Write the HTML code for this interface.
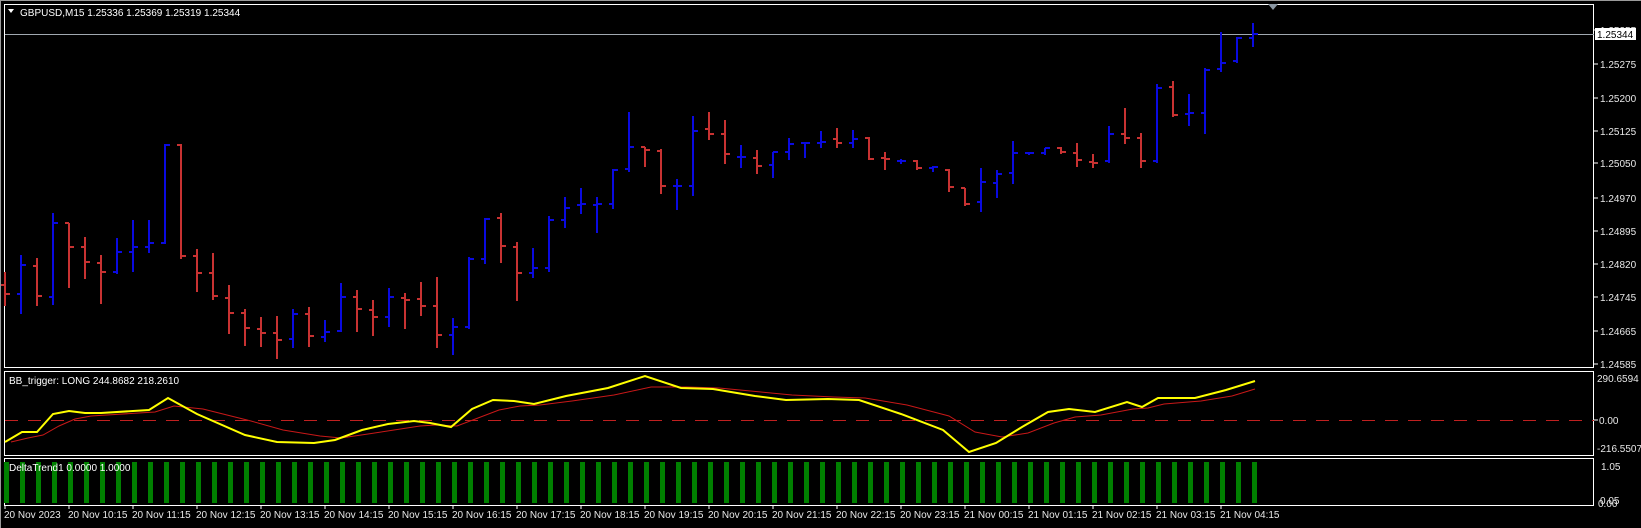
<!DOCTYPE html>
<html><head><meta charset="utf-8"><style>
html,body{margin:0;padding:0;background:#000;width:1641px;height:528px;overflow:hidden}
body{position:relative;font-family:"Liberation Sans",sans-serif;font-size:10px;color:#e8e8e8}
svg{position:absolute;left:0;top:0}
</style></head><body>
<svg id="s" width="1641" height="528" xmlns="http://www.w3.org/2000/svg" font-family="Liberation Sans, sans-serif" font-size="10"></svg>
<script>
var B=[[272,305,285,294],[255,313,294,265],[258,305,266,296],[213,304,297,223],[223,287,223,247],[237,278,247,262],[255,303,263,272],[238,273,272,252],[220,271,252,247],[220,252,247,243],[144,243,243,145],[144,258,145,256],[249,291,256,273],[253,299,273,296],[285,333,298,313],[309,345,313,328],[317,346,329,333],[316,358,333,340],[309,347,339,314],[307,346,314,336],[320,341,337,332],
[283,331,331,297],[290,331,297,309],[300,335,310,317],[288,326,317,297],[293,328,298,300],[282,315,299,306],[277,347,306,335],[318,354,335,327],[257,328,327,259],[218,263,259,219],[213,262,218,246],[242,300,247,273],[248,277,273,268],[216,271,268,220],[197,227,220,208],[188,213,205,204],[197,232,205,204],[169,208,204,170],[112,171,169,147],
[147,166,147,150],[149,193,151,186],[179,209,186,186],[116,195,186,131],[112,139,129,134],[120,163,134,154],[145,167,157,157],[150,173,158,166],[152,177,165,152],[138,159,152,144],[143,157,143,143],[131,147,143,142],[128,147,139,143],[130,147,143,139],[137,159,138,159],[152,169,158,159],[159,163,161,161],[160,169,161,168],[166,171,168,167],[169,191,170,187],[188,205,188,204],
[168,211,202,182],[170,197,183,174],[141,183,173,153],[152,154,153,153],[148,154,153,148],[147,153,148,152],[143,166,153,160],[154,167,162,163],[126,162,161,134],[108,143,134,138],[133,167,138,161],[84,162,161,88],[81,116,87,115],[94,125,114,113],[68,133,113,70],[32,71,69,63],[37,62,61,38],[23,46,38,34]];
var o='';
o+='<rect x="0" y="0" width="1641" height="1" fill="#9a9a9a"/><rect x="0" y="0" width="1" height="528" fill="#9a9a9a"/>';
o+='<rect x="4.5" y="4.5" width="1589" height="363" fill="none" stroke="#fff"/>';
o+='<rect x="4.5" y="371.5" width="1589" height="84" fill="none" stroke="#fff"/>';
o+='<rect x="4.5" y="458.5" width="1589" height="47" fill="none" stroke="#fff"/>';
o+='<line x1="5" y1="34.5" x2="1594" y2="34.5" stroke="#a0a8b0"/>';
o+='<path d="M1268 4 L1278 4 L1273 10 Z" fill="#8a96a2"/>';
for(var i=0;i<B.length;i++){var b=B[i],x=5+16*i,c=b[3]<b[2]?'#0a0ae0':(b[3]>b[2]?'#c83232':'#0a0ae0');
if(i==42||i==50)c='#0a0ae0';
o+='<g stroke="'+c+'" stroke-width="2"><line x1="'+x+'" y1="'+b[0]+'" x2="'+x+'" y2="'+(b[1]+1)+'"/><line x1="'+(x-4)+'" y1="'+b[2]+'" x2="'+x+'" y2="'+b[2]+'"/><line x1="'+x+'" y1="'+b[3]+'" x2="'+(x+5)+'" y2="'+b[3]+'"/></g>';}
var L=[["1.25355",30],["1.25275",64],["1.25200",98],["1.25125",131],["1.25050",163],["1.24970",198],["1.24895",231],["1.24820",264],["1.24745",297],["1.24665",331],["1.24585",364]];
L.forEach(function(l){o+='<line x1="1594" y1="'+l[1]+'" x2="1598" y2="'+l[1]+'" stroke="#fff"/><text x="1600" y="'+(l[1]+4)+'" fill="#e8e8e8">'+l[0]+'</text>';});
o+='<rect x="1595" y="28" width="41" height="12" fill="#fff"/><text x="1597" y="38" fill="#000">1.25344</text>';
o+='<path d="M8 9 L14 9 L11 13 Z" fill="#fff"/><text x="20" y="16" fill="#fff">GBPUSD,M15  1.25336 1.25369 1.25319 1.25344</text>';
o+='<line x1="5" y1="420.5" x2="1594" y2="420.5" stroke="#c02020" stroke-dasharray="13,10"/>';
var P=[[5,442],[22,432],[37,432],[53,414],[69,411],[85,413],[101,413],[133,411],[149,410],[168,398],[197,414],[245,435],[277,442],[314,443],[335,440],[362,430],[388,424],[414,421],[430,423],[451,427],[472,409],[493,400],[514,401],[534,404],[566,396],[608,388],[645,376],[681,388],[713,389],[755,396],[786,400],[828,399],[859,400],[901,414],[943,430],[969,452],[996,443],[1022,427],[1048,412],[1069,409],[1095,412],[1127,402],[1142,407],[1158,398],[1195,398],[1226,390],[1255,381]];
function pts(a){return a.map(function(p){return p[0]+','+p[1]}).join(' ');}
var R=[],v=P[0][1];P.forEach(function(p,k){v=v+(p[1]-v)*0.45;R.push([p[0]+6>1255?1255:p[0]+6,Math.round(v)]);});
o+='<polyline points="'+pts(R)+'" fill="none" stroke="#c81818" stroke-width="1"/>';
o+='<polyline points="'+pts(P)+'" fill="none" stroke="#ffff00" stroke-width="2"/>';
o+='<text x="9" y="384" fill="#fff">BB_trigger: LONG 244.8682 218.2610</text>';
o+='<text x="1597" y="382" fill="#e8e8e8">290.6594</text><line x1="1594" y1="420" x2="1598" y2="420" stroke="#fff"/><text x="1599" y="424" fill="#e8e8e8">0.00</text><text x="1597" y="452" fill="#e8e8e8">-216.5507</text>';
for(var i=0;i<79;i++){o+='<rect x="'+(4+16*i)+'" y="462" width="5" height="41" fill="#008000"/>';}
o+='<text x="9" y="471" fill="#fff">DeltaTrend1 0.0000 1.0000</text>';
o+='<text x="1601" y="470" fill="#e8e8e8">1.05</text><text x="1600" y="504" fill="#e8e8e8">0.05</text><text x="1598" y="507" fill="#e8e8e8">0.00</text>';
var D=["20 Nov 2023"];for(var h=10;h<=23;h++)D.push("20 Nov "+h+":15");for(var h=0;h<=4;h++)D.push("21 Nov 0"+h+":15");
D.forEach(function(d,k){var x=5+64*k;o+='<line x1="'+x+'" y1="505" x2="'+x+'" y2="509" stroke="#fff"/><text x="'+(x-1)+'" y="518" fill="#e8e8e8">'+d+'</text>';});
document.getElementById('s').innerHTML=o;
</script>
</body></html>
